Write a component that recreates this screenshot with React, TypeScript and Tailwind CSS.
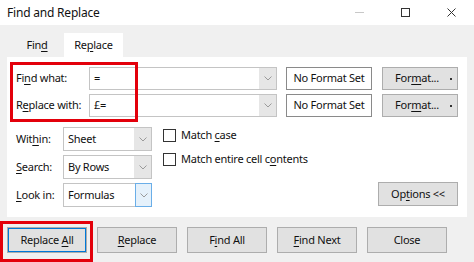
import React from 'react';

const Chevron = () => (
  <svg width="8" height="5" viewBox="0 0 8 5" fill="none">
    <path d="M0.5 0.5L4 4L7.5 0.5" stroke="#9a9a9a" strokeWidth="1" />
  </svg>
);

const U = ({ children }: { children: React.ReactNode }) => (
  <span className="underline underline-offset-[2px] decoration-[1px]">{children}</span>
);

const Combo = ({ value, width, active }: { value: string; width: string; active?: boolean }) => (
  <div className={`flex h-full ${width} border border-[#c4c4c4] bg-white`}>
    <div className="flex-1 flex items-center pl-[4px]">{value}</div>
    <div
      className={`w-[17px] flex items-center justify-center ${
        active ? 'bg-[#e5f1fb] border border-[#6aaee8] -m-[1px] ml-0' : 'bg-[#e6e6e6]'
      }`}
    >
      <Chevron />
    </div>
  </div>
);

const Button = ({ children, className = '' }: { children: React.ReactNode; className?: string }) => (
  <div className={`flex items-center justify-center bg-[#e1e1e1] border border-[#adadad] ${className}`}>
    <span>{children}</span>
  </div>
);

const FormatButton = () => (
  <div className="ml-[10px] w-[76px] h-full relative flex items-center justify-center bg-[#e1e1e1] border border-[#adadad]">
    <span className="pr-[6px]">
      For<U>m</U>at...
    </span>
    <span className="absolute right-[5px] top-[10px] w-[2px] h-[2px] bg-[#333]" />
  </div>
);

const App = () => {
  return (
    <div
      className="w-[474px] h-[262px] bg-[#f0f0f0] flex flex-col overflow-hidden text-[11px] text-[#111] tracking-[-0.25px]"
      style={{ fontFamily: '"Segoe UI", "Noto Sans", sans-serif' }}
    >
      {/* title bar */}
      <div className="h-[25px] bg-white flex items-center justify-between shrink-0">
        <span className="pl-[7px] text-[12px] tracking-[-0.2px]">Find and Replace</span>
        <div className="flex h-full">
          <div className="w-[46px] flex items-center justify-center">
            <div className="w-[9px] h-px bg-[#c8c8c8]" />
          </div>
          <div className="w-[46px] flex items-center justify-center">
            <div className="w-[9px] h-[9px] border border-[#333]" />
          </div>
          <div className="w-[46px] flex items-center justify-center">
            <svg width="9" height="9" viewBox="0 0 9 9">
              <path d="M0.5 0.5L8.5 8.5M8.5 0.5L0.5 8.5" stroke="#333" strokeWidth="1" />
            </svg>
          </div>
        </div>
      </div>

      {/* tabs */}
      <div className="h-[32px] flex items-end pl-[10px] shrink-0">
        <div className="w-[54px] h-[24px] flex items-center justify-center">
          <span>
            Fin<U>d</U>
          </span>
        </div>
        <div className="w-[59px] h-[24px] bg-white flex items-center justify-center">
          <span>
            Re<U>p</U>lace
          </span>
        </div>
      </div>

      {/* panel */}
      <div className="relative mx-[7px] h-[160px] bg-white pt-[10px] px-[9px] shrink-0">
        <div className="flex flex-col gap-[4px]">
          <div className="flex h-[23px] items-center">
            <div className="w-[73px]">
              Fi<U>n</U>d what:
            </div>
            <Combo value="=" width="w-[188px]" />
            <div className="ml-[9px] w-[86px] h-full flex items-center justify-center border border-[#8a8a8a]">
              No Format Set
            </div>
            <FormatButton />
          </div>
          <div className="flex h-[23px] items-center">
            <div className="w-[73px]">
              R<U>e</U>place with:
            </div>
            <Combo value="£=" width="w-[188px]" />
            <div className="ml-[9px] w-[86px] h-full flex items-center justify-center border border-[#8a8a8a]">
              No Format Set
            </div>
            <FormatButton />
          </div>
        </div>

        <div className="flex items-end mt-[10px]">
          <div className="flex flex-col gap-[4px]">
            <div className="flex h-[24px] items-center">
              <div className="w-[47px]">
                Wit<U>h</U>in:
              </div>
              <Combo value="Sheet" width="w-[89px]" />
            </div>
            <div className="flex h-[24px] items-center">
              <div className="w-[47px]">
                <U>S</U>earch:
              </div>
              <Combo value="By Rows" width="w-[89px]" />
            </div>
            <div className="flex h-[24px] items-center">
              <div className="w-[47px]">
                <U>L</U>ook in:
              </div>
              <Combo value="Formulas" width="w-[89px]" active />
            </div>
          </div>

          <div className="self-start flex flex-col gap-[11px] ml-[11px] pt-[2px]">
            <div className="flex items-center h-[13px] gap-[5px]">
              <div className="w-[13px] h-[13px] border border-[#333] bg-white" />
              <span>
                Match <U>c</U>ase
              </span>
            </div>
            <div className="flex items-center h-[13px] gap-[5px]">
              <div className="w-[13px] h-[13px] border border-[#333] bg-white" />
              <span>
                Match entire cell c<U>o</U>ntents
              </span>
            </div>
          </div>

          <Button className="ml-auto w-[80px] h-[24px] mb-[1px]">
            Op<U>t</U>ions &lt;&lt;
          </Button>
        </div>

        <div className="absolute left-[3px] top-[5px] w-[128px] h-[60px] border-[3px] border-[#e3000b]" />
      </div>

      {/* footer buttons */}
      <div className="flex gap-[10px] px-[7px] pt-[10px]">
        <div className="relative">
          <Button className="w-[80px] h-[26px] border-[#0078d7] outline outline-1 outline-[#0078d7] -outline-offset-2">
            Replace <U>A</U>ll
          </Button>
          <div className="absolute -left-[7px] -top-[6px] w-[93px] h-[41px] border-[3px] border-[#e3000b]" />
        </div>
        <Button className="w-[80px] h-[26px]">
          <U>R</U>eplace
        </Button>
        <Button className="w-[80px] h-[26px]">
          F<U>i</U>nd All
        </Button>
        <Button className="w-[80px] h-[26px]">
          <U>F</U>ind Next
        </Button>
        <Button className="w-[80px] h-[26px]">Close</Button>
      </div>
    </div>
  );
};

export default App;
